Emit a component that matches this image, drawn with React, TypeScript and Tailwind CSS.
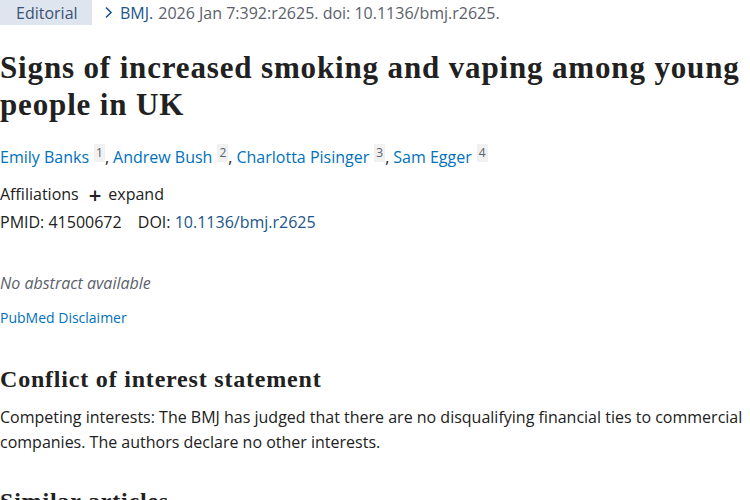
export default function App() {
  const authors = [
    { name: 'Emily Banks', n: 1 },
    { name: 'Andrew Bush', n: 2 },
    { name: 'Charlotta Pisinger', n: 3 },
    { name: 'Sam Egger', n: 4 },
  ];

  return (
    <div className="h-[500px] w-[750px] overflow-hidden bg-white font-['Open_Sans',sans-serif] text-[#212121]">
      {/* Citation bar */}
      <div className="flex h-[25px] items-center text-[16px]">
        <span className="flex h-full w-[92px] items-center bg-[#dfe5ee] pl-[16px] text-[#3a5275]">Editorial</span>
        <svg className="ml-[12px]" width="9" height="13" viewBox="0 0 9 13" fill="none">
          <path d="M2 1.5l5 5-5 5" stroke="#20558a" strokeWidth="1.6" />
        </svg>
        <span className="ml-[7px] text-[#20558a]">BMJ.</span>
        <span className="ml-[5px] text-[#5b616b]">2026 Jan 7:392:r2625. doi: 10.1136/bmj.r2625.</span>
      </div>

      {/* Title */}
      <h1 className="mt-[24px] font-['Liberation_Serif',serif] text-[31px] font-bold leading-[37px] tracking-[0.85px] text-[#212121]">
        Signs of increased smoking and vaping among young people in UK
      </h1>

      {/* Authors */}
      <div className="mt-[22px] flex items-baseline text-[16px] text-[#0071bc]">
        {authors.map((a, i) => (
          <span key={a.name} className="flex items-baseline">
            {i > 0 && <span className="mr-[4px] text-[#212121]">,</span>}
            <span>{a.name}</span>
            <span className="relative top-[-6px] ml-[5px] bg-[#f1f1f1] px-[2px] text-[12px] text-[#5b616b]">{a.n}</span>
          </span>
        ))}
      </div>

      <div className="mt-[13px] flex items-center text-[16px]">
        <span>Affiliations</span>
        <span className="ml-[10px] text-[22px] font-semibold leading-none">+</span>
        <span className="ml-[7px]">expand</span>
      </div>
      <div className="mt-[4px] text-[16px]">
        PMID: 41500672 <span className="ml-[12px]">DOI:</span>{' '}
        <span className="text-[#20558a]">10.1136/bmj.r2625</span>
      </div>

      <p className="mt-[37px] text-[16px] italic text-[#5b616b]">No abstract available</p>
      <p className="mt-[12px] text-[14px] text-[#0071bc]">PubMed Disclaimer</p>

      <h2 className="mt-[35px] font-['Liberation_Serif',serif] text-[24px] font-bold leading-[32px] tracking-[0.8px] text-[#212121]">
        Conflict of interest statement
      </h2>
      <p className="mt-[10px] text-[16px] leading-[25px]">
        Competing interests: The BMJ has judged that there are no disqualifying financial ties to commercial companies. The authors declare no other interests.
      </p>

      <h2 className="mt-[30px] font-['Liberation_Serif',serif] text-[24px] font-bold leading-[32px] tracking-[0.8px] text-[#212121]">
        Similar articles
      </h2>
    </div>
  );
}
